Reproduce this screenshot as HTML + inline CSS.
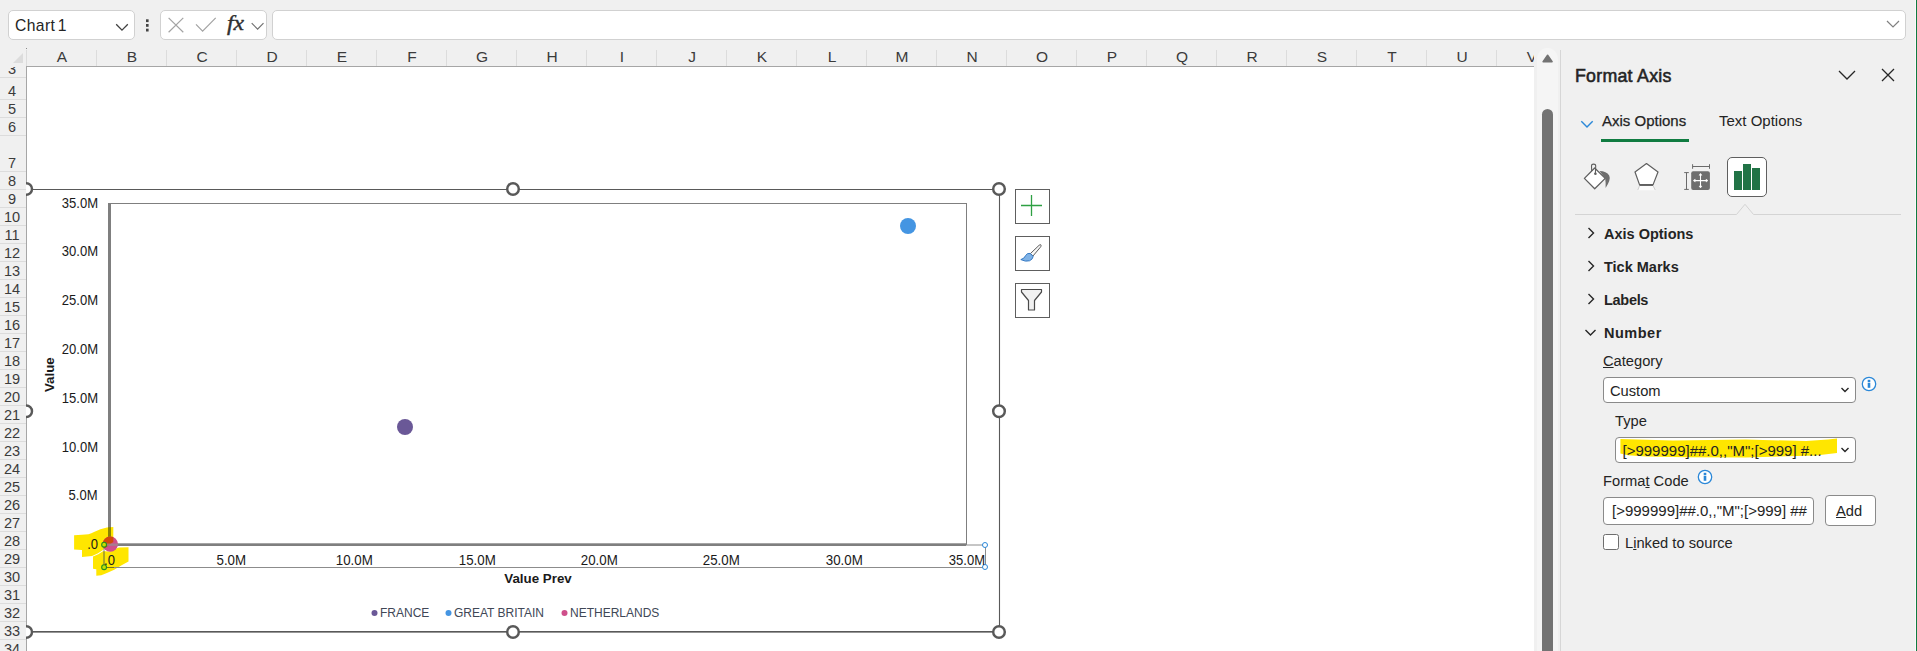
<!DOCTYPE html>
<html><head><meta charset="utf-8">
<style>
*{box-sizing:border-box;margin:0;padding:0}
html,body{width:1917px;height:651px;overflow:hidden;background:#f0f0f0;font-family:"Liberation Sans",sans-serif;color:#242424}
.abs{position:absolute}
.box{position:absolute;background:#fff;border:1px solid #d1d1d1;border-radius:5px}
.t{position:absolute;white-space:nowrap;line-height:1}
.colh{position:absolute;top:50px;height:16px;width:70px;text-align:center;font-size:15.500px;line-height:14.500px;color:#3b3b3b;border-right:1px solid #dcdcdc}
.rowh{position:absolute;left:0;width:26px;text-align:center;font-size:15.500px;color:#3b3b3b;border-bottom:1px solid #dcdcdc;line-height:1}
.rowh span{position:absolute;left:0;right:2px;bottom:0.600px;text-align:center;font-size:15px;transform:scaleX(0.970)}
.ax{position:absolute;font-size:13.33px;line-height:1;color:#1a1a1a;white-space:nowrap}
.sec{position:absolute;left:1604px;font-size:14.500px;font-weight:bold;color:#242424;white-space:nowrap;line-height:1}
.lbl{position:absolute;font-size:14.700px;color:#242424;white-space:nowrap;line-height:1}
</style></head><body>
<!-- formula bar -->
<div class="box" style="left:8px;top:10px;width:127px;height:30px"></div>
<div class="t" style="left:15px;top:18px;font-size:15.700px;color:#242424;letter-spacing:0.400px;word-spacing:-2.400px">Chart 1</div>
<svg class="abs" style="left:113.500px;top:20.500px" width="16" height="12"><path d="M2.2 3.3 L8 9.1 L13.800 3.300" fill="none" stroke="#404040" stroke-width="1.3"/></svg>
<svg class="abs" style="left:145px;top:18px" width="5" height="16"><rect x="1" y="1.300" width="2.600" height="2.800" fill="#444"/><rect x="1" y="6" width="2.600" height="2.800" fill="#444"/><rect x="1" y="10.700" width="2.600" height="2.800" fill="#444"/></svg>
<div class="box" style="left:160px;top:10px;width:107px;height:30px"></div>
<svg class="abs" style="left:160px;top:10px" width="107" height="30">
<path d="M8.6 7.9 L23.3 22.2 M23.3 7.9 L8.6 22.2" stroke="#a3a3a3" stroke-width="1.2" fill="none"/>
<path d="M36 14.4 L42.6 21.2 L55.7 7.8" stroke="#a3a3a3" stroke-width="1.2" fill="none"/>
<path d="M91.7 13.2 L97.6 19.1 L103.5 13.2" stroke="#707070" stroke-width="1.2" fill="none"/>
</svg>
<div class="t" style="left:227.200px;top:12.600px;font-family:'Liberation Serif',serif;font-style:italic;font-size:21.500px;color:#303030;-webkit-text-stroke:0.400px #303030;transform:scaleX(1.1);transform-origin:0 0">fx</div>
<div class="box" style="left:272px;top:10px;width:1634px;height:30px"></div>
<svg class="abs" style="left:1884px;top:17px" width="18" height="14"><path d="M3 4 L9 10 L15 4" fill="none" stroke="#808080" stroke-width="1.2"/></svg>

<!-- grid -->
<div class="abs" id="grid" style="left:26px;top:66px;width:1508px;height:585px;background:#fff;border-left:1px solid #a6a6a6;border-top:1px solid #a6a6a6"></div>
<div class="abs" style="left:26px;top:50px;width:1px;height:16px;background:#dcdcdc"></div>
<div class="abs" style="left:26px;top:48px;width:1px;height:1px;background:#8a8a8a"></div>
<div id="cols"><div class="colh" style="left:27px;width:70px;"><div style="width:70px">A</div></div><div class="colh" style="left:97px;width:70px;"><div style="width:70px">B</div></div><div class="colh" style="left:167px;width:70px;"><div style="width:70px">C</div></div><div class="colh" style="left:237px;width:70px;"><div style="width:70px">D</div></div><div class="colh" style="left:307px;width:70px;"><div style="width:70px">E</div></div><div class="colh" style="left:377px;width:70px;"><div style="width:70px">F</div></div><div class="colh" style="left:447px;width:70px;"><div style="width:70px">G</div></div><div class="colh" style="left:517px;width:70px;"><div style="width:70px">H</div></div><div class="colh" style="left:587px;width:70px;"><div style="width:70px">I</div></div><div class="colh" style="left:657px;width:70px;"><div style="width:70px">J</div></div><div class="colh" style="left:727px;width:70px;"><div style="width:70px">K</div></div><div class="colh" style="left:797px;width:70px;"><div style="width:70px">L</div></div><div class="colh" style="left:867px;width:70px;"><div style="width:70px">M</div></div><div class="colh" style="left:937px;width:70px;"><div style="width:70px">N</div></div><div class="colh" style="left:1007px;width:70px;"><div style="width:70px">O</div></div><div class="colh" style="left:1077px;width:70px;"><div style="width:70px">P</div></div><div class="colh" style="left:1147px;width:70px;"><div style="width:70px">Q</div></div><div class="colh" style="left:1217px;width:70px;"><div style="width:70px">R</div></div><div class="colh" style="left:1287px;width:70px;"><div style="width:70px">S</div></div><div class="colh" style="left:1357px;width:70px;"><div style="width:70px">T</div></div><div class="colh" style="left:1427px;width:70px;"><div style="width:70px">U</div></div><div class="colh" style="left:1497px;width:37px;overflow:hidden;border-right:none;"><div style="width:70px">V</div></div></div>
<div id="rows"><div class="rowh" style="top:67px;height:11px;overflow:hidden;"><span>3</span></div><div class="rowh" style="top:78px;height:22px;"><span>4</span></div><div class="rowh" style="top:100px;height:18px;"><span>5</span></div><div class="rowh" style="top:118px;height:18px;"><span>6</span></div><div class="rowh" style="top:136px;height:36px;"><span>7</span></div><div class="rowh" style="top:172px;height:18px;"><span>8</span></div><div class="rowh" style="top:190px;height:18px;"><span>9</span></div><div class="rowh" style="top:208px;height:18px;"><span>10</span></div><div class="rowh" style="top:226px;height:18px;"><span>11</span></div><div class="rowh" style="top:244px;height:18px;"><span>12</span></div><div class="rowh" style="top:262px;height:18px;"><span>13</span></div><div class="rowh" style="top:280px;height:18px;"><span>14</span></div><div class="rowh" style="top:298px;height:18px;"><span>15</span></div><div class="rowh" style="top:316px;height:18px;"><span>16</span></div><div class="rowh" style="top:334px;height:18px;"><span>17</span></div><div class="rowh" style="top:352px;height:18px;"><span>18</span></div><div class="rowh" style="top:370px;height:18px;"><span>19</span></div><div class="rowh" style="top:388px;height:18px;"><span>20</span></div><div class="rowh" style="top:406px;height:18px;"><span>21</span></div><div class="rowh" style="top:424px;height:18px;"><span>22</span></div><div class="rowh" style="top:442px;height:18px;"><span>23</span></div><div class="rowh" style="top:460px;height:18px;"><span>24</span></div><div class="rowh" style="top:478px;height:18px;"><span>25</span></div><div class="rowh" style="top:496px;height:18px;"><span>26</span></div><div class="rowh" style="top:514px;height:18px;"><span>27</span></div><div class="rowh" style="top:532px;height:18px;"><span>28</span></div><div class="rowh" style="top:550px;height:18px;"><span>29</span></div><div class="rowh" style="top:568px;height:18px;"><span>30</span></div><div class="rowh" style="top:586px;height:18px;"><span>31</span></div><div class="rowh" style="top:604px;height:18px;"><span>32</span></div><div class="rowh" style="top:622px;height:18px;"><span>33</span></div><div class="rowh" style="top:640px;height:18px;"><span>34</span></div></div>
<svg class="abs" style="left:12px;top:52px" width="12" height="12"><path d="M11 1 L11 11 L1 11 Z" fill="#dcdcdc"/></svg>


<!-- chart -->
<svg class="abs" style="left:26px;top:170px;overflow:hidden" width="1100" height="481" viewBox="26 170 1100 481">
<!-- outer border -->
<path d="M27 189.500 H999.500 V631.700 H27" fill="#fff" stroke="#595959" stroke-width="1.100"/>
<path d="M27 631.700 H999.500" stroke="#595959" stroke-width="1.600" fill="none"/>
<!-- highlighter -->
<path d="M74.100 535.200 L82 534.700 L88.400 534.300 Q91.500 533.500 94 532 L100.400 529.200 L106.900 527.400 L113.300 526.900 L113.300 542.100 L106.900 546.700 L102.300 550.400 L97.600 553.600 L92.100 555.900 L82 556.900 L82 550 L74.100 549.500 Z" fill="#ffe600"/>
<path d="M128.500 547.200 L119 547.600 Q115 548.500 112.500 551 L108 551.500 L103.300 551 L98.300 554.300 L93 556.500 L93 568.800 L96.300 569.300 L96.300 575.800 L101.300 575.300 L106.900 573 L114.200 569.800 L121.600 565.200 L128.500 561.500 Z" fill="#ffe600"/>
<!-- plot area -->
<rect x="109.500" y="203.500" width="857" height="341" fill="none" stroke="#7f7f7f" stroke-width="1"/>
<rect x="108" y="203" width="3" height="343" fill="#7f7f7f"/>
<rect x="108" y="543.300" width="858" height="2.700" fill="#7f7f7f"/>
<rect x="108" y="527.200" width="3" height="10" fill="#8a8200"/>
<!-- axis selection box -->
<path d="M104 547.500 L104 567.500 L985.500 567.500 L985.500 545 L966 545" fill="none" stroke="#8c8c8c" stroke-width="1"/>
<path d="M104 551.500 L104 567" fill="none" stroke="#a39c12" stroke-width="1.300"/>
<path d="M104 567.500 H114" fill="none" stroke="#77741a" stroke-width="1"/>
<!-- points -->
<circle cx="405" cy="427" r="8" fill="#6a5897"/>
<circle cx="908" cy="226" r="8" fill="#4495e2"/>
<circle cx="110.300" cy="544.100" r="7.700" fill="#cf4f8b"/>
<clipPath id="cp"><circle cx="110.300" cy="544.100" r="7.700"/></clipPath>
<path d="M100 530 H113.300 V542.100 L106.900 546.700 L100 551 Z" fill="#d4480a" clip-path="url(#cp)"/>
<rect x="107" y="543.500" width="11" height="2.400" fill="#9a8a92" opacity="0.750" clip-path="url(#cp)"/>
<!-- axis handles -->
<circle cx="104.100" cy="544.700" r="2.400" fill="#c9dc00" stroke="#1f8f1f" stroke-width="1.100"/>
<circle cx="104.100" cy="567.200" r="2.400" fill="#c9dc00" stroke="#1f8f1f" stroke-width="1.100"/>
<circle cx="985" cy="545" r="2.500" fill="#fff" stroke="#2b88d8" stroke-width="1"/>
<circle cx="985" cy="567" r="2.500" fill="#fff" stroke="#2b88d8" stroke-width="1"/>
<!-- legend dots -->
<circle cx="374.5" cy="613" r="3" fill="#6a5897"/>
<circle cx="448.5" cy="613" r="3" fill="#4495e2"/>
<circle cx="564.5" cy="613" r="3" fill="#cf4f8b"/>
<!-- handles -->
<g fill="#fff" stroke="#595959" stroke-width="2.450">
<circle cx="26.200" cy="189" r="5.800"/><circle cx="513" cy="189" r="5.800"/><circle cx="999" cy="189" r="5.800"/>
<circle cx="26.200" cy="411.200" r="5.800"/><circle cx="999" cy="411.200" r="5.800"/>
<circle cx="26.200" cy="632" r="5.800"/><circle cx="513" cy="632" r="5.800"/><circle cx="999" cy="632" r="5.800"/>
</g>
<!-- side buttons -->
<g fill="#fff" stroke="#5e5e5e" stroke-width="1">
<rect x="1015.5" y="189.5" width="34" height="34"/><rect x="1015.5" y="236.500" width="34" height="34"/><rect x="1015.5" y="283.5" width="34" height="34"/>
</g>
<path d="M1031.500 195 V216 M1021 205.500 H1042" stroke="#2ea043" stroke-width="1.3" fill="none"/>
<!-- brush -->
<path d="M1030.400 253.600 L1039.200 245.200 Q1041.200 243.900 1041.100 245.700 Q1041 246.600 1040 247.700 L1032.800 256.200 Z" fill="#f8f8f8" stroke="#4a4a4a" stroke-width="0.900" stroke-linejoin="round"/>
<path d="M1030.200 253.400 Q1027 252.800 1025.600 255.600 Q1024.400 258.600 1020.800 259.600 Q1025.500 262 1029.500 260.800 Q1032.600 259.600 1033.200 256.400 Z" fill="#7fb2e6" stroke="#2a72c0" stroke-width="0.900" stroke-linejoin="round"/>
<!-- funnel -->
<path d="M1021.500 289.500 H1041.500 V292 L1034.500 300.500 V310 H1028.500 V300.500 L1021.500 292 Z" fill="#f1f1f1" stroke="#4a4a4a" stroke-width="1.2" stroke-linejoin="round"/>
</svg>
<div id="axl"><div class="ax" style="transform:scale(0.98,1.06);transform-origin:100% 81%;right:1819px;top:197.3px">35.0M</div><div class="ax" style="transform:scale(0.98,1.06);transform-origin:100% 81%;right:1819px;top:245.3px">30.0M</div><div class="ax" style="transform:scale(0.98,1.06);transform-origin:100% 81%;right:1819px;top:294.3px">25.0M</div><div class="ax" style="transform:scale(0.98,1.06);transform-origin:100% 81%;right:1819px;top:343.3px">20.0M</div><div class="ax" style="transform:scale(0.98,1.06);transform-origin:100% 81%;right:1819px;top:392.3px">15.0M</div><div class="ax" style="transform:scale(0.98,1.06);transform-origin:100% 81%;right:1819px;top:441.3px">10.0M</div><div class="ax" style="transform:scale(0.98,1.06);transform-origin:100% 81%;right:1819px;top:489.3px">5.0M</div><div class="ax" style="transform:scale(0.98,1.06);transform-origin:100% 81%;right:1819px;top:538.3px">.0</div><div class="ax" style="left:201.3px;width:60px;text-align:center;top:554.4px;transform:scale(1,1.06);transform-origin:50% 81%">5.0M</div><div class="ax" style="left:324.3px;width:60px;text-align:center;top:554.4px;transform:scale(1,1.06);transform-origin:50% 81%">10.0M</div><div class="ax" style="left:447.3px;width:60px;text-align:center;top:554.4px;transform:scale(1,1.06);transform-origin:50% 81%">15.0M</div><div class="ax" style="left:569.3px;width:60px;text-align:center;top:554.4px;transform:scale(1,1.06);transform-origin:50% 81%">20.0M</div><div class="ax" style="left:691.3px;width:60px;text-align:center;top:554.4px;transform:scale(1,1.06);transform-origin:50% 81%">25.0M</div><div class="ax" style="left:814.3px;width:60px;text-align:center;top:554.4px;transform:scale(1,1.06);transform-origin:50% 81%">30.0M</div><div class="ax" style="left:104.300px;top:554.400px;transform:scale(0.98,1.06);transform-origin:50% 81%">.0</div><div class="ax" style="right:932px;top:554.400px;transform:scale(0.98,1.06);transform-origin:100% 81%">35.0M</div></div>
<div class="ax" style="left:504.300px;top:572px;font-weight:bold;color:#1a1a1a">Value Prev</div>
<div class="ax" style="left:30px;top:368px;width:40px;text-align:center;font-weight:bold;transform:rotate(-90deg);transform-origin:center">Value</div>
<div class="ax" style="left:380px;top:607px;font-size:12px;color:#404756">FRANCE</div>
<div class="ax" style="left:454px;top:607px;font-size:12px;color:#404756">GREAT BRITAIN</div>
<div class="ax" style="left:570px;top:607px;font-size:12px;color:#404756">NETHERLANDS</div>

<!-- scrollbar -->
<div class="abs" style="left:1537px;top:48px;width:21px;height:620px;background:#f5f5f5;border-radius:10.500px"></div>
<svg class="abs" style="left:1541px;top:53px" width="13" height="11"><path d="M2.1 8.7 L6.6 2.3 L11.1 8.7 Z" fill="#737373" stroke="#737373" stroke-width="1.5" stroke-linejoin="round"/></svg>
<div class="abs" style="left:1542px;top:109px;width:11px;height:560px;background:#737373;border-radius:5.5px"></div>
<div class="abs" style="left:1560px;top:50px;width:1px;height:601px;background:#d6d6d6"></div>


<!-- pane -->
<div class="t" style="left:1575px;top:68.300px;font-size:17.800px;font-weight:normal;color:#242424;letter-spacing:0.250px;-webkit-text-stroke:0.550px #242424">Format Axis</div>
<svg class="abs" style="left:1836px;top:66px" width="22" height="18"><path d="M3 5 L11 13 L19 5" fill="none" stroke="#262626" stroke-width="1.3"/></svg>
<svg class="abs" style="left:1880px;top:67px" width="16" height="16"><path d="M2 2 L14 14 M14 2 L2 14" fill="none" stroke="#262626" stroke-width="1.3"/></svg>
<svg class="abs" style="left:1580px;top:118px" width="14" height="11"><path d="M1.3 3.2 L7 9 L12.7 3.2" fill="none" stroke="#2b88d8" stroke-width="1.4"/></svg>
<div class="t" style="left:1602px;top:112.600px;font-size:15px;color:#242424;-webkit-text-stroke:0.250px #242424">Axis Options</div>
<div class="abs" style="left:1601px;top:139px;width:88px;height:3px;background:#107c41"></div>
<div class="t" style="left:1719px;top:112.600px;font-size:15px;color:#242424">Text Options</div>

<svg class="abs" style="left:1570px;top:150px" width="340" height="70" viewBox="1570 150 340 70">
<!-- paint bucket -->
<path d="M1584.400 178.400 L1594.700 168 L1605.200 178.400 L1594.700 188.800 Z" fill="#fff" stroke="#5f5f5f" stroke-width="1.300" stroke-linejoin="round"/>
<path d="M1595.400 173.500 L1595.700 166 Q1595.700 164.100 1593.600 164.100 Q1591.500 164.100 1591.500 166 L1591.700 171" fill="none" stroke="#5f5f5f" stroke-width="1.100"/>
<circle cx="1595.400" cy="173.800" r="1.300" fill="#5f5f5f"/>
<path d="M1599.500 171 Q1606.500 171.200 1609.200 175.500 Q1611.200 179.500 1605.600 188 Q1605.800 182 1605.200 178.400 Z" fill="#6e6e6e"/>
<!-- pentagon -->
<path d="M1639.600 185.600 L1637.800 190.200 H1655.200 L1653.100 185.600 Z" fill="#fbfbfb"/>
<path d="M1639.600 185.600 L1637.800 190 M1653.100 185.600 L1655.200 190" fill="none" stroke="#c9c9c9" stroke-width="0.900"/>
<path d="M1646.500 163.600 L1658 172 L1653.100 184.600 H1639.500 L1635 172 Z" fill="#fff" stroke="#5f5f5f" stroke-width="1.200" stroke-linejoin="round"/>
<path d="M1639.500 185 H1653.100" stroke="#5f5f5f" stroke-width="1.900" fill="none"/>
<!-- size icon -->
<path d="M1684.200 172.600 H1688.800 M1684.200 189.400 H1688.800 M1686.500 172.600 V189.400" stroke="#6a6a6a" stroke-width="1" fill="none"/>
<path d="M1692.600 164.200 V168.800 M1709.500 164.200 V168.800 M1692.600 166.500 H1709.500" stroke="#6a6a6a" stroke-width="1" fill="none"/>
<rect x="1691.200" y="171.200" width="18.700" height="18.700" rx="2" fill="#6e6e6e"/>
<path d="M1700.500 174 V187.400 M1694 180.600 H1707.300" stroke="#fff" stroke-width="1.100" fill="none"/>
<path d="M1699 175.300 L1700.500 173.300 L1702 175.300 Z M1699 186 L1700.500 188 L1702 186 Z M1695.200 179.100 L1693.200 180.600 L1695.200 182.100 Z M1706 179.100 L1708 180.600 L1706 182.100 Z" fill="#fff" stroke="#fff" stroke-width="0.400"/>
<!-- selected bars -->
<rect x="1727.500" y="157.500" width="39" height="39" rx="4.500" fill="#fff" stroke="#5f5f5f" stroke-width="1"/>
<rect x="1734" y="171" width="8" height="19" fill="#217346"/>
<rect x="1743" y="164" width="8" height="26" fill="#217346"/>
<rect x="1752" y="168" width="8" height="22" fill="#217346"/>
<!-- separator -->
<path d="M1575 214.500 H1736.500 L1745 204.300 L1753.500 214.500 H1901" fill="none" stroke="#d4d4d4" stroke-width="1"/>
</svg>

<svg class="abs" style="left:1584px;top:224px" width="14" height="120" viewBox="1584 224 14 120">
<g fill="none" stroke="#262626" stroke-width="1.400">
<path d="M1588.500 228 L1593.500 233 L1588.500 238"/>
<path d="M1588.500 261 L1593.500 266 L1588.500 271"/>
<path d="M1588.500 294 L1593.500 299 L1588.500 304"/>
<path d="M1585.500 330 L1590.500 335 L1595.500 330"/>
</g></svg>
<div class="sec" style="top:226.800px">Axis Options</div>
<div class="sec" style="top:259.800px">Tick Marks</div>
<div class="sec" style="top:292.800px;letter-spacing:-0.300px">Labels</div>
<div class="sec" style="top:325.800px;letter-spacing:0.500px">Number</div>

<div class="lbl" style="left:1603px;top:353.6px"><u>C</u>ategory</div>
<div class="box" style="left:1603px;top:377px;width:253px;height:26px;border-color:#8a8a8a;border-radius:4px"></div>
<div class="lbl" style="left:1610px;top:383.6px">Custom</div>
<svg class="abs" style="left:1840px;top:386px" width="10" height="8"><path d="M1.500 2 L5 5.500 L8.500 2" fill="none" stroke="#262626" stroke-width="1.400"/></svg>
<svg class="abs info" style="left:1860.500px;top:376.300px" width="16" height="16"><circle cx="8" cy="8" r="6.700" fill="#fff" stroke="#2b88d8" stroke-width="1.300"/><rect x="6.700" y="6.900" width="2.600" height="4.900" fill="#2b88d8"/><rect x="6.700" y="3.800" width="2.600" height="2.400" fill="#2b88d8"/></svg>

<div class="lbl" style="left:1615px;top:413.6px">Type</div>
<div class="box" style="left:1615px;top:437px;width:241px;height:26px;border-color:#8a8a8a;border-radius:4px"></div>
<svg class="abs" style="left:1616px;top:437px" width="230" height="26"><path d="M4.400 2 L57 3.600 L130 2.600 L190 4 L212 2.600 L221 1.500 L221 16 L200 18.500 L130 20.400 L70 20.200 L30 19.400 L12 18.200 L4.400 16.400 Z" fill="#ffe600"/></svg>
<div class="lbl" style="left:1622.500px;top:442.900px;font-size:15px">[&gt;999999]##.0,,"M";[&gt;999] #...</div>
<svg class="abs" style="left:1840px;top:446px" width="10" height="8"><path d="M1.500 2 L5 5.500 L8.500 2" fill="none" stroke="#262626" stroke-width="1.400"/></svg>

<div class="lbl" style="left:1603px;top:473.6px">Forma<u>t</u> Code</div>
<svg class="abs info" style="left:1697px;top:469.100px" width="16" height="16"><circle cx="8" cy="8" r="6.700" fill="#fff" stroke="#2b88d8" stroke-width="1.300"/><rect x="6.700" y="6.900" width="2.600" height="4.900" fill="#2b88d8"/><rect x="6.700" y="3.800" width="2.600" height="2.400" fill="#2b88d8"/></svg>
<div class="box" style="left:1603px;top:497px;width:211px;height:28px;border-color:#8a8a8a;border-radius:4px;overflow:hidden"><div class="lbl" style="left:8px;top:5px;font-size:15px">[&gt;999999]##.0,,"M";[&gt;999] ##</div></div>
<div class="box" style="left:1825px;top:495px;width:51px;height:30.500px;border-color:#8a8a8a;border-radius:4px"></div>
<div class="lbl" style="left:1836px;top:503.6px"><u>A</u>dd</div>
<div class="box" style="left:1603px;top:534.200px;width:16px;height:16px;border-color:#6e6e6e;border-radius:2.500px"></div>
<div class="lbl" style="left:1625px;top:535.6px">L<u>i</u>nked to source</div>

<!-- right edge -->
<div class="abs" style="left:1915px;top:0;width:1px;height:651px;background:#fafafa"></div>
<div class="abs" style="left:1916px;top:0;width:1px;height:651px;background:#107c41"></div>

</body></html>
